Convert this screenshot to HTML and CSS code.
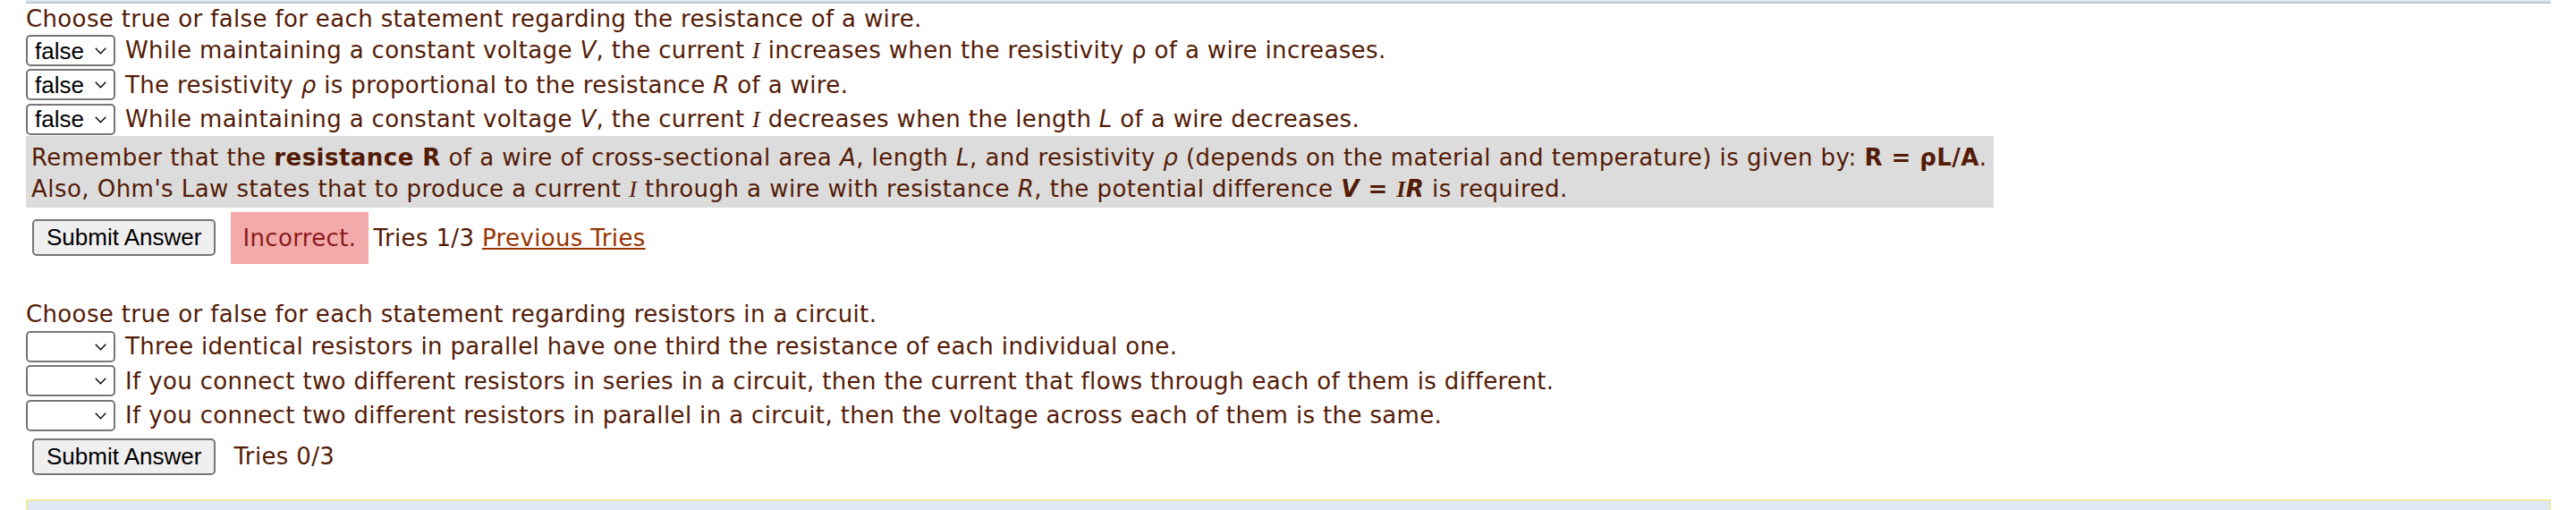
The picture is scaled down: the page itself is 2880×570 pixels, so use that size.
FILE: index.html
```html
<!DOCTYPE html>
<html lang="en">
  <head>
    <meta charset="UTF-8" />
    <meta name="viewport" content="width=device-width, initial-scale=1.0" />
    <title>Resistance of a wire</title>
    <link rel="stylesheet" href="styles.css">
  </head>
  <body>
    <div class="topbar"></div>

    <form class="part" autocomplete="off">
      <p class="intro">Choose true or false for each statement regarding the resistance of a wire.</p>
      <div class="stmts">
        <div class="stmt">
          <span class="sel">
            <select name="q1a"><option value=""></option><option value="true">true</option><option value="false" selected>false</option></select>
            <svg viewBox="0 0 13 8"><path d="M0.8 0.8 L6.5 6.8 L12.2 0.8" /></svg>
          </span>
          <span>While maintaining a constant voltage <i>V</i>, the current <i class="sym">I</i> increases when the resistivity ρ of a wire increases.</span>
        </div>
        <div class="stmt">
          <span class="sel">
            <select name="q1b"><option value=""></option><option value="true">true</option><option value="false" selected>false</option></select>
            <svg viewBox="0 0 13 8"><path d="M0.8 0.8 L6.5 6.8 L12.2 0.8" /></svg>
          </span>
          <span>The resistivity <i>ρ</i> is proportional to the resistance <i>R</i> of a wire.</span>
        </div>
        <div class="stmt">
          <span class="sel">
            <select name="q1c"><option value=""></option><option value="true">true</option><option value="false" selected>false</option></select>
            <svg viewBox="0 0 13 8"><path d="M0.8 0.8 L6.5 6.8 L12.2 0.8" /></svg>
          </span>
          <span>While maintaining a constant voltage <i>V</i>, the current <i class="sym">I</i> decreases when the length <i>L</i> of a wire decreases.</span>
        </div>
      </div>
      <div class="hint">
        Remember that the <b>resistance R</b> of a wire of cross-sectional area <i>A</i>, length <i>L</i>, and resistivity <i>ρ</i> (depends on the material and temperature) is given by: <b>R = ρL/A</b>.<br>
        Also, Ohm's Law states that to produce a current <i class="sym">I</i> through a wire with resistance <i>R</i>, the potential difference <b><i>V</i> = <i class="sym">I</i><i>R</i></b> is required.
      </div>
      <div class="submit">
        <button type="button">Submit Answer</button>
        <span class="incorrect">Incorrect.</span>
        <span class="tries">Tries 1/3 <a href="javascript:">Previous Tries</a></span>
      </div>
    </form>

    <form class="part" autocomplete="off">
      <p class="intro">Choose true or false for each statement regarding resistors in a circuit.</p>
      <div class="stmts">
        <div class="stmt">
          <span class="sel">
            <select name="q2a"><option value="" selected></option><option value="true">true</option><option value="false">false</option></select>
            <svg viewBox="0 0 13 8"><path d="M0.8 0.8 L6.5 6.8 L12.2 0.8" /></svg>
          </span>
          <span>Three identical resistors in parallel have one third the resistance of each individual one.</span>
        </div>
        <div class="stmt">
          <span class="sel">
            <select name="q2b"><option value="" selected></option><option value="true">true</option><option value="false">false</option></select>
            <svg viewBox="0 0 13 8"><path d="M0.8 0.8 L6.5 6.8 L12.2 0.8" /></svg>
          </span>
          <span>If you connect two different resistors in series in a circuit, then the current that flows through each of them is different.</span>
        </div>
        <div class="stmt">
          <span class="sel">
            <select name="q2c"><option value="" selected></option><option value="true">true</option><option value="false">false</option></select>
            <svg viewBox="0 0 13 8"><path d="M0.8 0.8 L6.5 6.8 L12.2 0.8" /></svg>
          </span>
          <span>If you connect two different resistors in parallel in a circuit, then the voltage across each of them is the same.</span>
        </div>
      </div>
      <div class="submit plain">
        <button type="button">Submit Answer</button>
        <span class="tries">Tries 0/3</span>
      </div>
    </form>

    <div class="nextbox"></div>
  </body>
</html>
```

FILE: styles.css
```css
* {
  margin: 0;
  padding: 0;
}
body {
  margin: 0 28px 0 29px;
  font-family: Verdana, "DejaVu Sans", sans-serif;
  font-size: 26px;
  letter-spacing: 0.36px;
  color: #541b06;
  background: #fff;
  overflow: hidden;
}
.topbar {
  height: 2px;
  background: #dfe7f1;
  border-bottom: 2px solid #c3c8d0;
}
.intro {
  line-height: 35px;
  white-space: nowrap;
}
.stmts {
  display: flex;
  flex-direction: column;
  gap: 3.33px;
}
.stmt {
  display: flex;
  align-items: center;
  gap: 11px;
  height: 35px;
  white-space: nowrap;
}
.sel {
  position: relative;
  display: block;
  flex: none;
  width: 100px;
  height: 35px;
}
.sel select {
  appearance: none;
  -webkit-appearance: none;
  display: block;
  width: 100%;
  height: 100%;
  padding-left: 8px;
  border: 2px solid #767676;
  border-radius: 5px;
  background: #fff;
  color: #000;
  font: 26px "Liberation Sans", Arial, sans-serif;
  letter-spacing: 0;
  outline: none;
}
.sel svg {
  position: absolute;
  right: 10px;
  top: 14px;
  width: 13px;
  height: 8px;
  pointer-events: none;
}
.sel svg path {
  fill: none;
  stroke: #000;
  stroke-width: 1.4;
}
.sym {
  font-family: "Liberation Serif", "Times New Roman", serif;
}
.hint {
  width: fit-content;
  margin-top: 1.33px;
  padding: 7px 7px 3px 6px;
  line-height: 35px;
  letter-spacing: 0.46px;
  background: #dcdcdc;
  white-space: nowrap;
}
.submit {
  display: flex;
  align-items: center;
  height: 58px;
  margin-top: 5px;
  white-space: nowrap;
}
.submit button {
  height: 41px;
  margin-left: 7px;
  padding: 0 14px;
  border: 2px solid #767676;
  border-radius: 5px;
  background: #efefef;
  color: #000;
  font: 26px "Liberation Sans", Arial, sans-serif;
  letter-spacing: 0;
  cursor: pointer;
}
.incorrect {
  display: flex;
  align-items: center;
  height: 58px;
  margin-left: 17px;
  padding: 0 14px 0 13px;
  background: #f3aaaa;
  color: #8b1a1a;
}
.tries {
  margin-left: 5px;
}
.tries a {
  color: #993300;
}
.part + .part {
  margin-top: 38.7px;
}
.part + .part .stmts {
  margin-top: 1.3px;
}
.submit.plain {
  height: 41px;
  margin-top: 8px;
}
.submit.plain .tries {
  margin-left: 20px;
}
.nextbox {
  height: 80px;
  margin-top: 27px;
  background: #dde8f4;
  border: 2px solid #f0ea9c;
  border-bottom: 0;
}
```
